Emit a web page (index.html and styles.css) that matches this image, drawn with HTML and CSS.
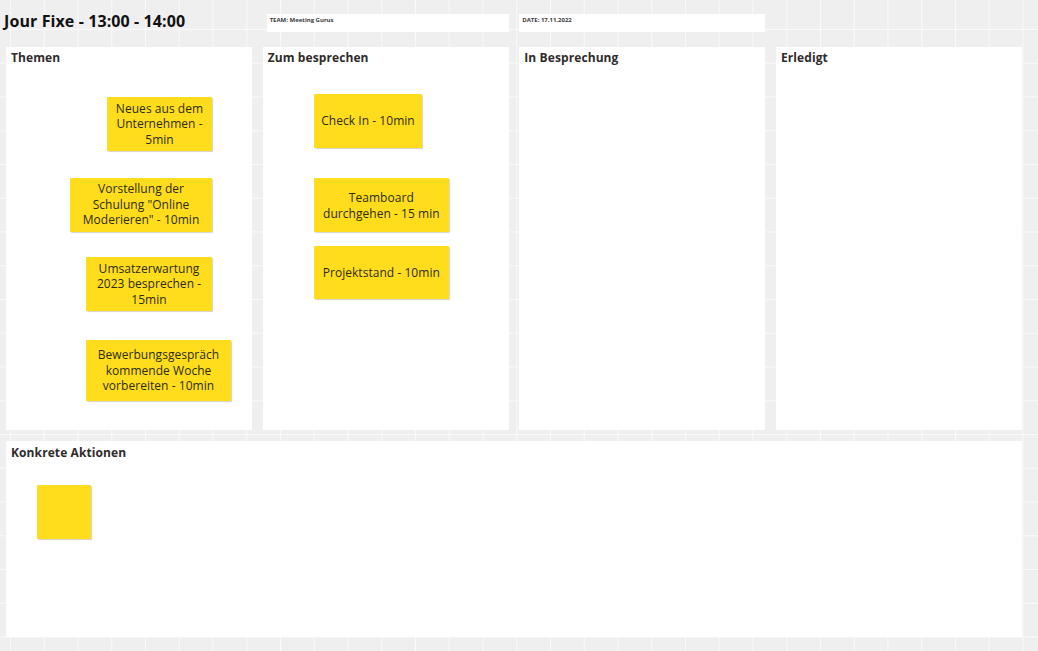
FILE: index.html
```html
<!DOCTYPE html>
<html lang="de">
<head>
<meta charset="utf-8">
<title>Jour Fixe</title>
<link rel="stylesheet" href="styles.css">
</head>
<body>
<main class="board">
  <header class="head">
    <h1 class="title">Jour Fixe - 13:00 - 14:00</h1>
    <div class="field field-team">TEAM: Meeting Gurus</div>
    <div class="field">DATE: 17.11.2022</div>
  </header>
  <section class="columns">
    <article class="panel">
      <h2 class="panel-title">Themen</h2>
      <div class="sticky s-neues">Neues aus dem Unternehmen - 5min</div>
      <div class="sticky s-vorstellung">Vorstellung der Schulung "Online Moderieren" - 10min</div>
      <div class="sticky s-umsatz">Umsatzerwartung 2023 besprechen - 15min</div>
      <div class="sticky s-bewerbung">Bewerbungsgespräch kommende Woche vorbereiten - 10min</div>
    </article>
    <article class="panel">
      <h2 class="panel-title">Zum besprechen</h2>
      <div class="sticky s-checkin">Check In - 10min</div>
      <div class="sticky s-teamboard">Teamboard durchgehen - 15 min</div>
      <div class="sticky s-projekt">Projektstand - 10min</div>
    </article>
    <article class="panel">
      <h2 class="panel-title">In Besprechung</h2>
    </article>
    <article class="panel">
      <h2 class="panel-title">Erledigt</h2>
    </article>
  </section>
  <section class="panel panel-wide">
    <h2 class="panel-title panel-title-wide">Konkrete Aktionen</h2>
    <div class="sticky s-leer"></div>
  </section>
</main>
</body>
</html>
```
FILE: styles.css
```css
html, body {
  margin: 0;
  height: 100%;
}
body {
  overflow: hidden;
  font-family: "Open Sans", "Liberation Sans", sans-serif;
  color: #222;
  background-color: #efefef;
  background-image:
    linear-gradient(to right, #fafafa 1px, transparent 1px),
    linear-gradient(to bottom, #fafafa 1px, transparent 1px);
  background-size: 33.75px 33.75px;
  background-position: 10px 29px;
}
.board {
  display: flex;
  flex-direction: column;
  padding: 14px 16px 14px 6px;
  height: 651px;
  box-sizing: border-box;
}
.head {
  display: grid;
  grid-template-columns: repeat(4, 246.125px);
  column-gap: 10.5px;
  height: 12px;
  align-items: stretch;
}
.title {
  margin: -4px 0 0 -2px;
  font-size: 16px;
  line-height: 22px;
  font-weight: 700;
  letter-spacing: 0.1px;
  color: #111;
  white-space: nowrap;
}
.field {
  background: #fff;
  font-size: 6px;
  font-weight: 700;
  line-height: 12px;
  padding-left: 3px;
  color: #3a3a3a;
}
.field-team {
  margin-left: 4px;
}
.columns {
  display: grid;
  grid-template-columns: repeat(4, 246.125px);
  column-gap: 10.5px;
  height: 383px;
  margin-top: 21px;
}
.panel {
  position: relative;
  background: #fff;
}
.panel-wide {
  height: 196px;
  margin-top: 11px;
  width: 1016px;
}
.panel-title {
  margin: 0;
  padding: 2px 0 0 5px;
  font-size: 12px;
  line-height: 17px;
  font-weight: 700;
  color: #2f2b2b;
  letter-spacing: 0.1px;
}
.panel-title-wide {
  padding-top: 3px;
}
.sticky {
  position: absolute;
  display: flex;
  align-items: center;
  justify-content: center;
  box-sizing: border-box;
  padding: 0 3px;
  text-align: center;
  background: #ffdd1c;
  border-radius: 1px;
  box-shadow: 1px 1px 1px rgba(120, 110, 60, 0.3);
  font-size: 12px;
  line-height: 15.6px;
  letter-spacing: 0.04px;
  color: #2e2c18;
}
.s-neues { left: 101px; top: 50px; width: 105px; height: 54px; padding: 0 8px; }
.s-vorstellung { left: 64px; top: 131px; width: 142px; height: 54px; padding: 0 8px 1px; }
.s-umsatz { left: 80px; top: 210px; width: 126px; height: 54px; padding: 0 8px; }
.s-bewerbung { left: 80px; top: 293px; width: 145px; height: 61px; }
.s-checkin { left: 51.4px; top: 47px; width: 108px; height: 54px; }
.s-teamboard { left: 51.4px; top: 131px; width: 134.6px; height: 54px; padding: 1px 8px 0; }
.s-projekt { left: 51.4px; top: 199px; width: 134.6px; height: 53px; }
.s-leer { left: 31px; top: 44px; width: 54px; height: 54px; }
```
